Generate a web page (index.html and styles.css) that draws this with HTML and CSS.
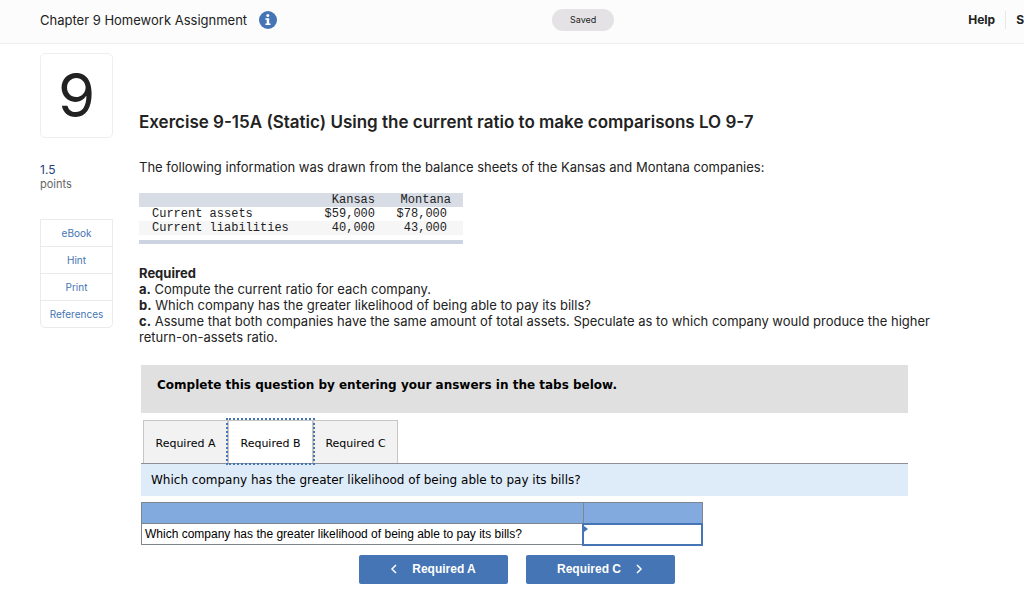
FILE: index.html
```html
<!DOCTYPE html>
<html lang="en">
<head>
  <meta charset="UTF-8">
  <meta name="viewport" content="width=device-width, initial-scale=1.0">
  <title>Chapter 9 Homework Assignment</title>
  <link rel="stylesheet" href="styles.css">
</head>
<body>
  <header class="topbar">
    <div class="assignment">
      <span>Chapter 9 Homework Assignment</span>
      <button class="info" type="button" aria-label="Assignment info">
        <svg width="18" height="18" viewBox="0 0 18 18">
          <circle cx="9" cy="9" r="9" fill="#4575b4"/>
          <circle cx="8.8" cy="4.6" r="1.5" fill="#fff"/>
          <path d="M6.4 7.2h3.8v5.2h1.3V14H6.4v-1.6h1.3V8.8H6.4z" fill="#fff"/>
        </svg>
      </button>
    </div>
    <div class="saved">Saved</div>
    <nav class="top-links">
      <a href="#">Help</a>
      <a href="#">S</a>
    </nav>
  </header>

  <div class="page">
    <!-- question number, points and resources -->
    <aside class="sidebar">
      <div class="number">9</div>
      <div class="points"><span class="score">1.5</span>points</div>
      <nav class="resources">
        <a href="#">eBook</a>
        <a href="#">Hint</a>
        <a href="#">Print</a>
        <a href="#">References</a>
      </nav>
    </aside>

    <main class="question">
      <h1>Exercise 9-15A (Static) Using the current ratio to make comparisons LO 9-7</h1>
      <p class="intro">The following information was drawn from the balance sheets of the Kansas and Montana companies:</p>

      <table class="figures">
        <thead>
          <tr><th></th><th>Kansas</th><th>Montana</th></tr>
        </thead>
        <tbody>
          <tr><td>Current assets</td><td>$59,000</td><td>$78,000</td></tr>
          <tr class="shade"><td>Current liabilities</td><td>40,000</td><td>43,000</td></tr>
        </tbody>
      </table>
      <div class="figures-end"></div>

      <div class="required">
        <div><b>Required</b></div>
        <div><b>a.</b> Compute the current ratio for each company.</div>
        <div><b>b.</b> Which company has the greater likelihood of being able to pay its bills?</div>
        <div><b>c.</b> Assume that both companies have the same amount of total assets. Speculate as to which company would produce the higher return-on-assets ratio.</div>
      </div>

      <section class="worksheet">
        <div class="instructions">Complete this question by entering your answers in the tabs below.</div>
        <div class="tabs" role="tablist">
          <button class="tab" type="button" role="tab">Required A</button>
          <button class="tab active" type="button" role="tab" aria-selected="true">Required B</button>
          <button class="tab" type="button" role="tab">Required C</button>
        </div>
        <div class="prompt">Which company has the greater likelihood of being able to pay its bills?</div>

        <table class="answers">
          <thead>
            <tr><th></th><th></th></tr>
          </thead>
          <tbody>
            <tr>
              <td><label for="answer">Which company has the greater likelihood of being able to pay its bills?</label></td>
              <td class="entry"><input type="text" id="answer"></td>
            </tr>
          </tbody>
        </table>

        <div class="pager">
          <button type="button">
            <svg width="8" height="10" viewBox="0 0 8 10"><path d="M6 1 2 5l4 4" fill="none" stroke="#fff" stroke-width="1.5"/></svg>
            Required A
          </button>
          <button type="button">
            Required C
            <svg width="8" height="10" viewBox="0 0 8 10"><path d="M2 1l4 4-4 4" fill="none" stroke="#fff" stroke-width="1.5"/></svg>
          </button>
        </div>
      </section>
    </main>
  </div>
</body>
</html>
```
FILE: styles.css
```css
* {
  box-sizing: border-box;
}
body {
  margin: 0;
  font-family: Inter, sans-serif;
  font-size: 13px;
  color: #222;
  background: #fff;
}
a {
  text-decoration: none;
}
button {
  cursor: pointer;
}

/* top bar */
.topbar {
  display: grid;
  grid-template-columns: 5fr auto 4fr;
  align-items: center;
  height: 44px;
  padding: 0 0 4px 40px;
  background: #fcfcfc;
  border-bottom: 1px solid #eee;
}
.assignment {
  display: flex;
  align-items: center;
  gap: 12px;
}
.info {
  display: flex;
  padding: 0;
  border: none;
  background: none;
}
.saved {
  padding: 0 18px;
  line-height: 22px;
  font-size: 9px;
  border-radius: 11px;
  background: #e4e2e5;
}
.top-links {
  display: flex;
  justify-content: flex-end;
  overflow: hidden;
}
.top-links a {
  padding-right: 10px;
  line-height: 18px;
  font-size: 12px;
  font-weight: bold;
  color: #222;
}
.top-links a + a {
  padding: 0 0 0 10px;
  border-left: 1px solid #e8e8e8;
}

.page {
  display: flex;
  gap: 26px;
  padding: 9px 40px 24px;
}

/* left column */
.sidebar {
  flex: 0 0 73px;
}
.number {
  height: 85px;
  line-height: 82px;
  text-align: center;
  font-size: 60px;
  border: 1px solid #eee;
  border-radius: 5px;
}
.points {
  margin-top: 24px;
  line-height: 15px;
  font-size: 11px;
  color: #666;
}
.score {
  display: block;
  font-size: 12px;
  color: #1f4380;
}
.resources {
  margin-top: 27px;
  border: 1px solid #eaeaea;
  border-radius: 0 0 5px 5px;
}
.resources a {
  display: block;
  line-height: 26px;
  text-align: center;
  font-size: 10px;
  color: #4575b4;
}
.resources a + a {
  border-top: 1px solid #eaeaea;
}

/* question text */
.question {
  flex: 1;
  min-width: 0;
  padding-top: 58px;
}
h1 {
  margin: 0;
  line-height: 22px;
  font-size: 17px;
  font-weight: 600;
}
.intro {
  margin: 26px 0 18px;
  line-height: 16px;
}
.figures {
  width: 324px;
  border-collapse: collapse;
  font-family: "Liberation Mono", monospace;
  font-size: 12px;
  line-height: 14px;
}
.figures th,
.figures td {
  padding: 0;
  font-weight: normal;
  text-align: right;
}
.figures thead {
  background: #d8dce5;
}
.figures th:last-child {
  width: 88px;
  padding-right: 12px;
}
.figures td:last-child {
  padding-right: 16px;
}
.figures td:first-child {
  padding-left: 13px;
  text-align: left;
}
.figures .shade {
  background: #f6f6f6;
}
.figures-end {
  width: 324px;
  height: 4px;
  margin-top: 5px;
  background: #cdd4e1;
}
.required {
  margin: 21px 0 20px;
  padding-right: 24px;
  line-height: 16px;
}

/* answer area */
.worksheet {
  margin: 0 76px 0 2px;
  font-family: "DejaVu Sans", sans-serif;
  font-size: 12px;
  color: #000;
}
.instructions {
  padding: 12px 16px 20px;
  line-height: 16px;
  font-weight: bold;
  background: #e0e0e0;
}
.tabs {
  display: flex;
  padding: 7px 2px 0;
  border-bottom: 1px solid #8c9096;
}
.tab {
  width: 85px;
  height: 43px;
  padding: 2px 0 0;
  font-family: inherit;
  font-size: 11px;
  color: #000;
  background: #f2f2f2;
  border: 1px solid #c6c6c6;
  border-bottom: none;
}
.tab.active {
  z-index: 1;
  background: #fff;
  outline: 2px dotted #4575b4;
}
.prompt {
  padding: 8px 10px;
  line-height: 16px;
  background: #deebf8;
}
.answers {
  width: 562px;
  margin-top: 6px;
  border-collapse: collapse;
  font-family: "Liberation Sans", Arial, sans-serif;
  font-size: 12px;
}
.answers th,
.answers td {
  height: 21px;
  padding: 0 3px;
  border: 1px solid #7f858d;
}
.answers th {
  background: #82aadf;
}
.answers th:last-child {
  width: 119px;
}
.answers .entry {
  position: relative;
  padding: 0;
  border: 2px solid #4575b4;
}
.entry input {
  display: block;
  width: 100%;
  height: 18px;
  padding: 0 6px;
  font: inherit;
  border: none;
}
/* blue corner marker on the answer cell */
.entry::before {
  content: "";
  position: absolute;
  top: 1px;
  left: 0;
  border: 3px solid transparent;
  border-left: 4px solid #4575b4;
}
.pager {
  display: flex;
  justify-content: center;
  gap: 18px;
  margin: 9px 0 0 -16px;
}
.pager button {
  display: flex;
  align-items: center;
  justify-content: center;
  gap: 14px;
  width: 149px;
  height: 29px;
  font: bold 12px "Liberation Sans", Arial, sans-serif;
  color: #fff;
  background: #4575b4;
  border: none;
  border-radius: 2px;
}
```
